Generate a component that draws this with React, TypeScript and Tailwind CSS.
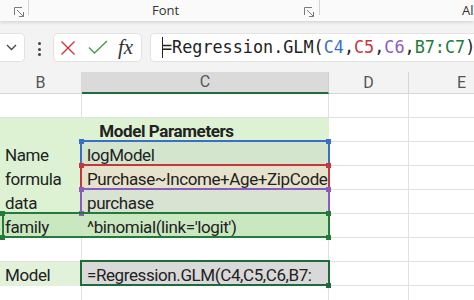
import { ReactNode } from "react";

const Launcher = () => (
  <svg width="11" height="10" viewBox="0 0 11 10" fill="none" stroke="#7a7a7a" strokeWidth="1">
    <path d="M0.5 8V0.5H8" />
    <path d="M3 3L9.5 9.5" />
    <path d="M9.5 5V9.5H5" />
  </svg>
);

const tones = {
  white: "bg-white border-[#e1e1e1]",
  green: "bg-[#dcf2d3] border-[#dcf2d3]",
  blueTint: "bg-[#d4e5ce] border-[#d4e5ce]",
  redTint: "bg-[#e6e2cc] border-[#e6e2cc]",
  purpleTint: "bg-[#d9e3d1] border-[#d9e3d1]",
  family: "bg-[#c9e8c0] border-[#c9e8c0]",
  model: "bg-[#e1f1da] border-[#e1f1da]",
  active: "bg-[#d9d9d9] border-[#d9d9d9]",
};

type Tone = keyof typeof tones;

const Cell = ({ tone = "white", children, extra = "" }: { tone?: Tone; children?: ReactNode; extra?: string }) => (
  <div
    className={`flex items-end overflow-hidden whitespace-nowrap border-r border-b pl-[5px] text-[17px] leading-[20px] tracking-[-0.4px] ${tones[tone]} ${extra}`}
  >
    {children}
  </div>
);

const Head = ({ label, selected = false }: { label: string; selected?: boolean }) => (
  <div
    className={
      selected
        ? "flex items-center justify-center border-r border-b-2 border-r-[#d0d0d0] border-b-[#1e6b3c] bg-[#dadada] text-[16px] text-[#555]"
        : "flex items-center justify-center border-r border-b border-[#d6d6d6] bg-[#f3f3f3] text-[16px] text-[#555]"
    }
  >
    {label}
  </div>
);

const Handle = ({ className }: { className: string }) => <div className={`absolute size-[5px] ${className}`} />;

export default function App() {
  return (
    <div className="h-[300px] w-[474px] overflow-hidden bg-white font-['Roboto',sans-serif] text-[#222]">
      {/* ribbon bottom edge */}
      <div className="relative z-10 flex h-[21px] bg-[#fafafa] font-['Open_Sans',sans-serif] text-[13px] text-[#333] shadow-[0_1px_4px_rgba(0,0,0,0.16)]">
        <div className="flex w-[29px] shrink-0 items-start">
          <div className="ml-[14px] mt-[7px]">
            <Launcher />
          </div>
          <div className="ml-auto h-[15px] w-px bg-[#d4d4d4]" />
        </div>
        <div className="flex w-[291px] shrink-0 items-start">
          <span className="ml-[123px] mt-[2px] leading-[17px]">Font</span>
          <div className="ml-auto mr-[4px] mt-[7px]">
            <Launcher />
          </div>
          <div className="h-[15px] w-px bg-[#d4d4d4]" />
        </div>
        <span className="ml-[142px] mt-[2px] shrink-0 whitespace-nowrap leading-[17px]">Alignment</span>
      </div>

      {/* formula bar */}
      <div className="flex h-[51px] items-start bg-[#f3f3f3] pt-[12px]">
        <div className="flex h-[29px] w-[25px] shrink-0 items-center justify-end rounded-r-[5px] border border-l-0 border-[#e2e2e2] bg-white pr-[7px]">
          <svg width="11" height="7" viewBox="0 0 11 7" fill="none" stroke="#444" strokeWidth="1.3">
            <path d="M1 1L5.5 5.5L10 1" />
          </svg>
        </div>
        <div className="ml-[13px] mt-[9px] flex w-[3px] shrink-0 flex-col gap-[2.5px]">
          <span className="size-[3px] rounded-full bg-[#444]" />
          <span className="size-[3px] rounded-full bg-[#444]" />
          <span className="size-[3px] rounded-full bg-[#444]" />
        </div>
        <div className="ml-[12px] flex h-[29px] w-[89px] shrink-0 items-center rounded-[5px] border border-[#e2e2e2] bg-white">
          <svg className="ml-[6px]" width="16" height="16" viewBox="0 0 16 16" fill="none" stroke="#d13438" strokeWidth="1.4">
            <path d="M1.5 1.5L14.5 14.5M14.5 1.5L1.5 14.5" />
          </svg>
          <svg className="ml-[12px]" width="20" height="15" viewBox="0 0 20 15" fill="none" stroke="#4c9a4c" strokeWidth="1.4">
            <path d="M1 7.5L6.5 13L19 1" />
          </svg>
          <span className="ml-[10px] font-['Liberation_Serif',serif] text-[21px] italic leading-none text-[#333]">fx</span>
        </div>
        <div className="ml-[8px] flex h-[29px] min-w-0 flex-1 items-center overflow-hidden whitespace-nowrap rounded-l-[5px] border border-r-0 border-[#e2e2e2] bg-white pl-[11px] font-['DejaVu_Sans_Mono',monospace] text-[16.8px]">
          <span className="h-[21px] w-px shrink-0 bg-[#222]" />
          <span className="-ml-px">
            =Regression.GLM(<span className="text-[#3b6fc7]">C4</span>,<span className="text-[#c2383c]">C5</span>,
            <span className="text-[#8b5cbf]">C6</span>,<span className="text-[#237a3a]">B7:C7</span>)
          </span>
        </div>
      </div>

      {/* sheet */}
      <div className="relative grid grid-cols-[82px_247px_80px_106px] grid-rows-[22px_repeat(9,24px)]">
        <Head label="B" />
        <Head label="C" selected />
        <Head label="D" />
        <Head label="E" />

        <Cell />
        <Cell />
        <Cell />
        <Cell />

        <Cell tone="green" extra="col-span-2 justify-center pl-0 font-bold">
          Model Parameters
        </Cell>
        <Cell />
        <Cell />

        <Cell tone="green">Name</Cell>
        <Cell tone="blueTint">logModel</Cell>
        <Cell />
        <Cell />

        <Cell tone="green">formula</Cell>
        <Cell tone="redTint">Purchase~Income+Age+ZipCode</Cell>
        <Cell />
        <Cell />

        <Cell tone="green">data</Cell>
        <Cell tone="purpleTint">purchase</Cell>
        <Cell />
        <Cell />

        <Cell tone="family">family</Cell>
        <Cell tone="family">^binomial(link='logit')</Cell>
        <Cell />
        <Cell />

        <Cell />
        <Cell />
        <Cell />
        <Cell />

        <Cell tone="model">Model</Cell>
        <Cell tone="active">=Regression.GLM(C4,C5,C6,B7:</Cell>
        <Cell />
        <Cell />

        <Cell />
        <Cell />
        <Cell />
        <Cell />

        {/* reference range outlines */}
        <div className="absolute left-[80px] top-[68px] h-[26px] w-[250px] border-2 border-[#3b6fc7]" />
        <Handle className="left-[79px] top-[67px] bg-[#3b6fc7]" />
        <Handle className="left-[326px] top-[67px] bg-[#3b6fc7]" />
        <Handle className="left-[79px] top-[91px] bg-[#3b6fc7]" />
        <Handle className="left-[326px] top-[91px] bg-[#3b6fc7]" />

        <div className="absolute left-[80px] top-[92px] h-[26px] w-[250px] border-2 border-[#c2383c]" />
        <Handle className="left-[79px] top-[91px] bg-[#c2383c]" />
        <Handle className="left-[326px] top-[91px] bg-[#c2383c]" />
        <Handle className="left-[79px] top-[115px] bg-[#c2383c]" />
        <Handle className="left-[326px] top-[115px] bg-[#c2383c]" />

        <div className="absolute left-[80px] top-[116px] h-[26px] w-[250px] border-2 border-[#8b5cbf]" />
        <Handle className="left-[79px] top-[115px] bg-[#8b5cbf]" />
        <Handle className="left-[326px] top-[115px] bg-[#8b5cbf]" />
        <Handle className="left-[79px] top-[139px] bg-[#8b5cbf]" />
        <Handle className="left-[326px] top-[139px] bg-[#8b5cbf]" />

        <div className="absolute left-[2px] top-[140px] h-[26px] w-[328px] border-2 border-[#237a3a]" />
        <Handle className="left-[0px] top-[139px] bg-[#237a3a]" />
        <Handle className="left-[326px] top-[139px] bg-[#237a3a]" />
        <Handle className="left-[0px] top-[163px] bg-[#237a3a]" />
        <Handle className="left-[326px] top-[163px] bg-[#237a3a]" />

        {/* active cell */}
        <div className="absolute left-[80px] top-[188px] h-[26px] w-[250px] border-2 border-[#1d6b3b]" />
        <Handle className="left-[326px] top-[211px] bg-[#1d6b3b]" />
      </div>
    </div>
  );
}
